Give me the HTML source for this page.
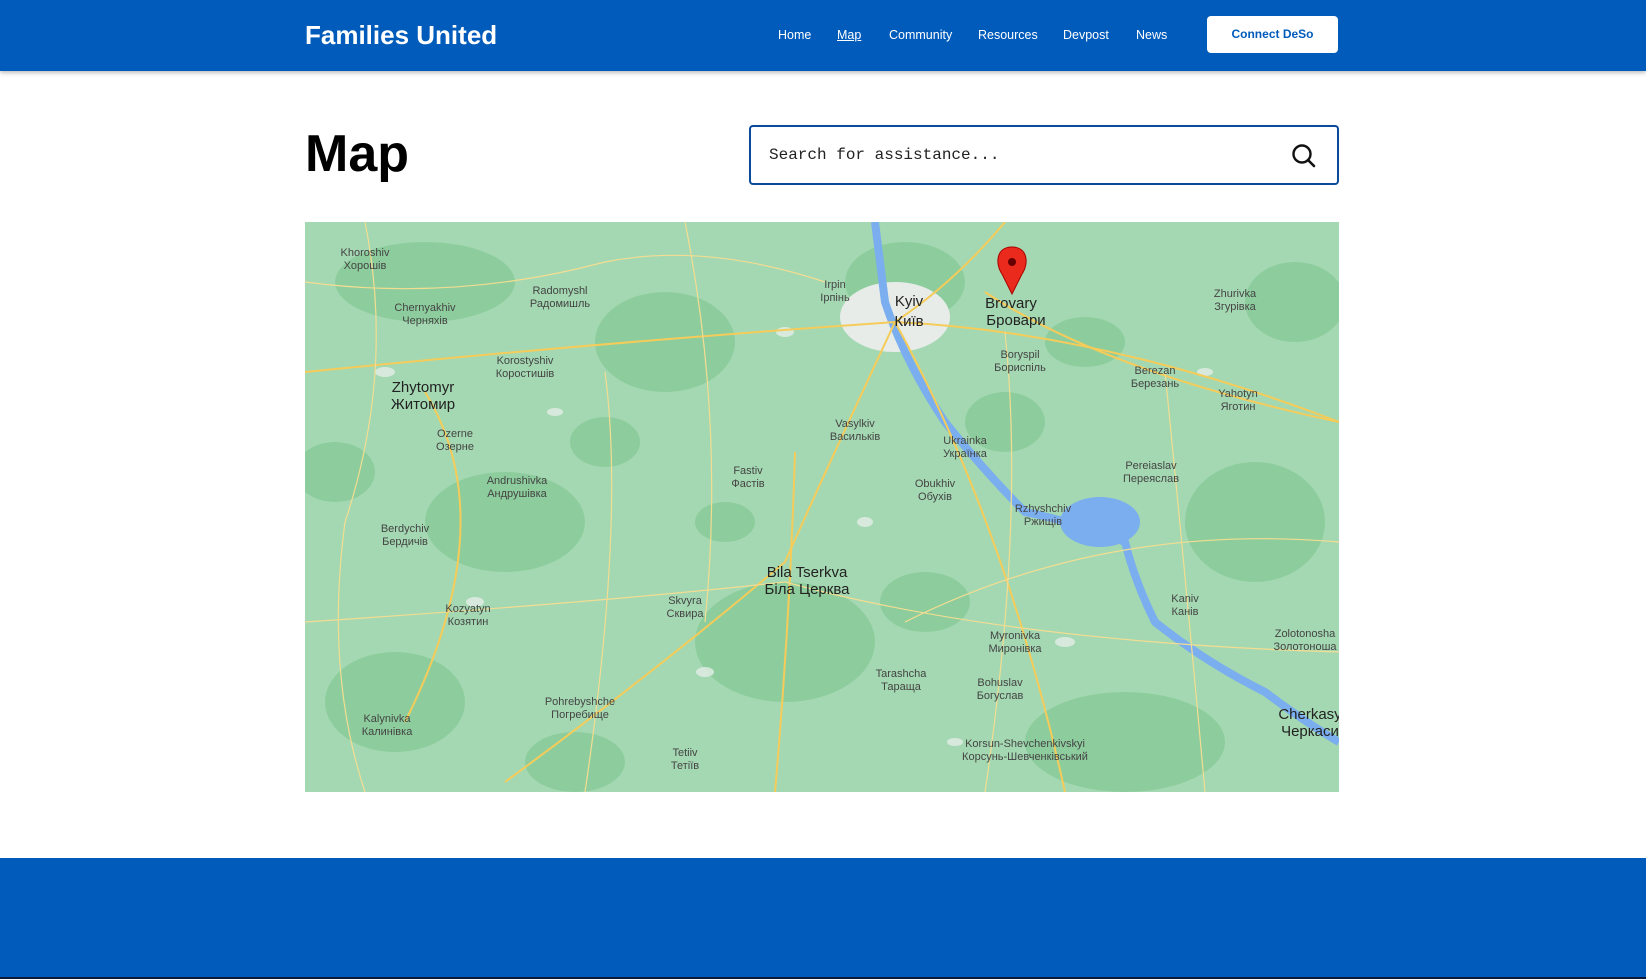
<!DOCTYPE html>
<html><head><meta charset="utf-8"><style>
*{margin:0;padding:0;box-sizing:border-box}
body{width:1646px;height:979px;background:#fff;font-family:"Liberation Sans",sans-serif;position:relative;overflow:hidden}
.hdr{position:absolute;left:0;top:0;width:1646px;height:71px;background:#005bbb;box-shadow:0 2px 4px rgba(0,0,0,.25)}
.logo{position:absolute;left:305px;top:20px;color:#fff;font-size:26px;font-weight:bold}
.nav a{position:absolute;top:28px;color:#fff;font-size:12.5px;text-decoration:none}
.btn{position:absolute;left:1207px;top:16px;width:131px;height:37px;background:#fff;border-radius:4px;color:#005bbb;font-size:12px;font-weight:bold;text-align:center;line-height:37px}
h1{position:absolute;left:305px;top:124px;font-size:52px;font-weight:bold;color:#000}
.search{position:absolute;left:749px;top:125px;width:590px;height:60px;border:2px solid #0a4b9c;border-radius:4px}
.search span{position:absolute;left:18px;top:19px;font-family:"Liberation Mono",monospace;font-size:16px;color:#222}
.map{position:absolute;left:305px;top:222px;width:1034px;height:570px;background:#a4d8b2;overflow:hidden}
.ft{position:absolute;left:0;top:858px;width:1646px;height:119px;background:#005bbb}
.ln{position:absolute;left:0;top:977px;width:1646px;height:2px;background:#0a1a3a}
</style></head><body>
<div class="hdr">
<div class="logo">Families United</div>
<div class="nav">
<a style="left:778px">Home</a>
<a style="left:837px;text-decoration:underline">Map</a>
<a style="left:889px">Community</a>
<a style="left:978px">Resources</a>
<a style="left:1063px">Devpost</a>
<a style="left:1136px">News</a>
</div>
<div class="btn">Connect DeSo</div>
</div>
<h1>Map</h1>
<div class="search"><span>Search for assistance...</span>
<svg style="position:absolute;left:540px;top:16px" width="26" height="26" viewBox="0 0 26 26"><circle cx="11" cy="11" r="8.5" fill="none" stroke="#111" stroke-width="2.4"/><path d="M17 17L23 23" stroke="#111" stroke-width="2.6" stroke-linecap="round"/></svg>
</div>
<div class="map">
<svg width="1034" height="570" viewBox="0 0 1034 570" style="position:absolute;left:0;top:0">
<g fill="#86c995" opacity=".75">
<ellipse cx="120" cy="60" rx="90" ry="40"/><ellipse cx="360" cy="120" rx="70" ry="50"/><ellipse cx="600" cy="60" rx="60" ry="40"/>
<ellipse cx="200" cy="300" rx="80" ry="50"/><ellipse cx="480" cy="420" rx="90" ry="60"/><ellipse cx="820" cy="520" rx="100" ry="50"/>
<ellipse cx="950" cy="300" rx="70" ry="60"/><ellipse cx="90" cy="480" rx="70" ry="50"/>
<ellipse cx="30" cy="250" rx="40" ry="30"/><ellipse cx="300" cy="220" rx="35" ry="25"/><ellipse cx="700" cy="200" rx="40" ry="30"/>
<ellipse cx="620" cy="380" rx="45" ry="30"/><ellipse cx="990" cy="80" rx="50" ry="40"/><ellipse cx="270" cy="540" rx="50" ry="30"/>
<ellipse cx="420" cy="300" rx="30" ry="20"/><ellipse cx="780" cy="120" rx="40" ry="25"/>
</g>
<g fill="#e4eee6" opacity=".8">
<ellipse cx="80" cy="150" rx="10" ry="5"/><ellipse cx="250" cy="190" rx="8" ry="4"/><ellipse cx="400" cy="450" rx="9" ry="5"/>
<ellipse cx="560" cy="300" rx="8" ry="5"/><ellipse cx="760" cy="420" rx="10" ry="5"/><ellipse cx="900" cy="150" rx="8" ry="4"/>
<ellipse cx="170" cy="380" rx="9" ry="5"/><ellipse cx="650" cy="520" rx="8" ry="4"/><ellipse cx="480" cy="110" rx="9" ry="5"/>
</g>
<ellipse cx="590" cy="95" rx="55" ry="35" fill="#e8ece9"/>
<path d="M570 0 Q575 40 580 80 Q600 140 640 200 Q680 250 720 290 Q770 300 820 320 Q830 360 850 400 Q900 440 960 470 Q1000 500 1034 520" fill="none" stroke="#7aaeee" stroke-width="8"/>
<ellipse cx="795" cy="300" rx="40" ry="25" fill="#7aaeee"/>
<g fill="none" stroke="#f5cc5a" stroke-width="2">
<path d="M0 150 Q300 120 590 100 Q800 110 1034 200"/>
<path d="M490 230 Q485 400 470 570"/><path d="M590 100 Q700 300 760 570"/>
<path d="M120 170 Q200 300 100 500"/><path d="M590 100 Q520 250 480 340 Q350 450 200 560"/>
<path d="M680 70 Q800 150 1034 200"/><path d="M590 100 Q650 60 700 0"/>
</g>
<g fill="none" stroke="#f3dd92" stroke-width="1.2">
<path d="M0 60 Q150 80 300 40 Q400 20 520 60"/><path d="M60 0 Q90 150 40 300 Q20 450 60 570"/>
<path d="M300 150 Q320 300 280 570"/><path d="M380 0 Q420 200 400 400"/>
<path d="M700 110 Q720 300 680 570"/><path d="M860 150 Q880 350 900 570"/>
<path d="M0 400 Q300 380 480 360 Q700 420 1034 430"/><path d="M600 400 Q800 300 1034 320"/>
</g>
<g font-family="Liberation Sans,sans-serif" font-size="11" fill="#444" text-anchor="middle">
<text x="60" y="34">Khoroshiv</text><text x="60" y="47">Хорошів</text>
<text x="255" y="72">Radomyshl</text><text x="255" y="85">Радомишль</text>
<text x="120" y="89">Chernyakhiv</text><text x="120" y="102">Черняхів</text>
<text x="220" y="142">Korostyshiv</text><text x="220" y="155">Коростишів</text>
<text x="150" y="215">Ozerne</text><text x="150" y="228">Озерне</text>
<text x="212" y="262">Andrushivka</text><text x="212" y="275">Андрушівка</text>
<text x="100" y="310">Berdychiv</text><text x="100" y="323">Бердичів</text>
<text x="163" y="390">Kozyatyn</text><text x="163" y="403">Козятин</text>
<text x="275" y="483">Pohrebyshche</text><text x="275" y="496">Погребище</text>
<text x="82" y="500">Kalynivka</text><text x="82" y="513">Калинівка</text>
<text x="380" y="382">Skvyra</text><text x="380" y="395">Сквира</text>
<text x="443" y="252">Fastiv</text><text x="443" y="265">Фастів</text>
<text x="550" y="205">Vasylkiv</text><text x="550" y="218">Васильків</text>
<text x="630" y="265">Obukhiv</text><text x="630" y="278">Обухів</text>
<text x="660" y="222">Ukrainka</text><text x="660" y="235">Українка</text>
<text x="738" y="290">Rzhyshchiv</text><text x="738" y="303">Ржищів</text>
<text x="710" y="417">Myronivka</text><text x="710" y="430">Миронівка</text>
<text x="596" y="455">Tarashcha</text><text x="596" y="468">Тараща</text>
<text x="695" y="464">Bohuslav</text><text x="695" y="477">Богуслав</text>
<text x="720" y="525">Korsun-Shevchenkivskyi</text><text x="720" y="538">Корсунь-Шевченківський</text>
<text x="380" y="534">Tetiiv</text><text x="380" y="547">Тетіїв</text>
<text x="850" y="152">Berezan</text><text x="850" y="165">Березань</text>
<text x="933" y="175">Yahotyn</text><text x="933" y="188">Яготин</text>
<text x="846" y="247">Pereiaslav</text><text x="846" y="260">Переяслав</text>
<text x="930" y="75">Zhurivka</text><text x="930" y="88">Згурівка</text>
<text x="715" y="136">Boryspil</text><text x="715" y="149">Бориспіль</text>
<text x="880" y="380">Kaniv</text><text x="880" y="393">Канів</text>
<text x="1000" y="415">Zolotonosha</text><text x="1000" y="428">Золотоноша</text>
<text x="530" y="66">Irpin</text><text x="530" y="79">Ірпінь</text>
</g>
<g font-family="Liberation Sans,sans-serif" font-size="15" fill="#222" text-anchor="middle">
<text x="118" y="170">Zhytomyr</text><text x="118" y="187">Житомир</text>
<text x="604" y="84">Kyiv</text><text x="604" y="104">Київ</text>
<text x="706" y="86">Brovary</text><text x="711" y="103">Бровари</text>
<text x="502" y="355">Bila Tserkva</text><text x="502" y="372">Біла Церква</text>
<text x="1005" y="497">Cherkasy</text><text x="1005" y="514">Черкаси</text>
</g>
<path d="M707 25 C691 25 690 42 697 52 L707 72 L717 52 C724 42 723 25 707 25Z" fill="#ea2a1c" stroke="#a00" stroke-width="1"/>
<circle cx="707" cy="40" r="4" fill="#600"/>
</svg>
</div>
<div class="ft"></div>
<div class="ln"></div>
</body></html>
